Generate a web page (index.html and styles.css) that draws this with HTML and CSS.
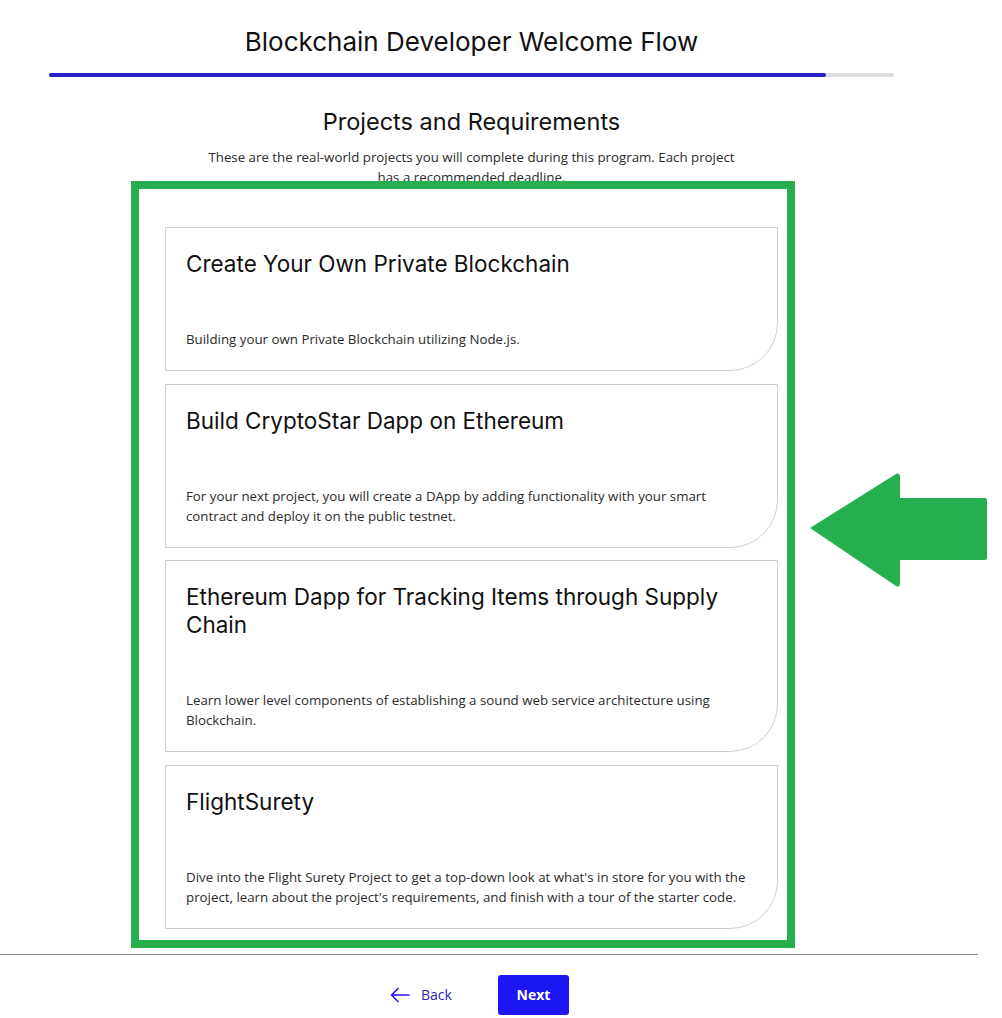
FILE: index.html
```html
<!DOCTYPE html>
<html lang="en">
<head>
    <meta charset="UTF-8">
    <meta name="viewport" content="width=device-width, initial-scale=1.0">
    <title>Blockchain Developer Welcome Flow</title>
    <link rel="stylesheet" href="styles.css">
</head>
<body>
    <div class="page">
        <header class="flow-header">
            <h1>Blockchain Developer Welcome Flow</h1>
            <div class="progress"><div class="progress-fill" style="width: 91.9%"></div></div>
        </header>

        <main class="step">
            <h2>Projects and Requirements</h2>
            <p class="intro">These are the real-world projects you will complete during this program. Each project has a recommended deadline.</p>

            <div class="projects">
                <div class="project-card">
                    <h3>Create Your Own Private Blockchain</h3>
                    <p>Building your own Private Blockchain utilizing Node.js.</p>
                </div>
                <div class="project-card">
                    <h3>Build CryptoStar Dapp on Ethereum</h3>
                    <p>For your next project, you will create a DApp by adding functionality with your smart contract and deploy it on the public testnet.</p>
                </div>
                <div class="project-card">
                    <h3>Ethereum Dapp for Tracking Items through Supply Chain</h3>
                    <p>Learn lower level components of establishing a sound web service architecture using Blockchain.</p>
                </div>
                <div class="project-card">
                    <h3>FlightSurety</h3>
                    <p>Dive into the Flight Surety Project to get a top-down look at what's in store for you with the project, learn about the project's requirements, and finish with a tour of the starter code.</p>
                </div>
                <div class="highlight-frame"></div>
            </div>
        </main>
    </div>

    <svg class="pointer-arrow" width="182" height="118" viewBox="0 0 182 118">
        <path d="M2 56 L88 2 Q92 0 92 5 L92 26 L177 26 Q179 26 179 28 L179 86 Q179 88 177 88 L92 88 L92 111 Q92 116 88 114 Z" fill="#27ae4f"/>
    </svg>

    <footer class="flow-footer">
        <button type="button" class="btn-back">
            <svg width="20" height="16" viewBox="0 0 20 16"><path d="M19 8 H2 M8 1.5 L1.5 8 L8 14.5" fill="none" stroke="#2015ff" stroke-width="1.6" stroke-linecap="round" stroke-linejoin="round"/></svg>
            Back
        </button>
        <button type="button" class="btn-next">Next</button>
    </footer>
</body>
</html>
```

FILE: styles.css
```css
body {
    margin: 0;
    font-family: "Open Sans", "Liberation Sans", sans-serif;
    color: #2b2b2b;
    background: #fff;
}
.page {
    width: 943px;
    padding: 0 49px;
    box-sizing: border-box;
}
.flow-header {
    padding-top: 26px;
}
.flow-header h1 {
    margin: 0;
    font-family: Inter, "Liberation Sans", sans-serif;
    font-weight: 400;
    font-size: 26px;
    line-height: 32px;
    text-align: center;
    color: #111;
}
.progress {
    margin-top: 15px;
    height: 4px;
    background: #dedede;
    border-radius: 2px;
}
.progress-fill {
    height: 4px;
    background: #2a1fc4;
    border-radius: 2px;
}
.step {
    padding-top: 30px;
}
.step h2 {
    margin: 0;
    font-family: Inter, "Liberation Sans", sans-serif;
    font-weight: 400;
    font-size: 23.5px;
    line-height: 30px;
    text-align: center;
    color: #111;
}
.intro {
    width: 540px;
    margin: 10px auto 0;
    font-size: 13.3px;
    line-height: 20px;
    text-align: center;
}
.projects {
    position: relative;
    width: 613px;
    margin: 40px auto 0;
    display: flex;
    flex-direction: column;
    gap: 12.5px;
}
.project-card {
    border: 1px solid #cfcfcf;
    border-bottom-right-radius: 48px;
    padding: 22px 20px 21px;
    background: #fff;
}
.project-card h3 {
    margin: 0 0 51px;
    font-family: Inter, "Liberation Sans", sans-serif;
    font-weight: 400;
    font-size: 22.5px;
    line-height: 28px;
    color: #111;
}
.project-card p {
    margin: 0;
    font-size: 13.3px;
    line-height: 20px;
}
.highlight-frame {
    position: absolute;
    left: -34px;
    top: -46px;
    right: -17px;
    bottom: -19px;
    border: 8px solid #27ae4f;
}
.pointer-arrow {
    position: absolute;
    left: 808px;
    top: 472px;
}
.flow-footer {
    width: 978px;
    margin-top: 25px;
    border-top: 1px solid #8a8a8a;
    display: flex;
    justify-content: center;
    align-items: center;
    gap: 46px;
    padding: 20px 19px 0 0;
    box-sizing: border-box;
}
.flow-footer button {
    font-family: "Open Sans", "Liberation Sans", sans-serif;
    font-size: 14px;
    cursor: pointer;
}
.btn-back {
    display: flex;
    align-items: center;
    gap: 11px;
    background: none;
    border: none;
    padding: 0;
    color: #2e26b8;
}
.btn-next {
    width: 71px;
    height: 40px;
    background: #1d16f4;
    color: #fff;
    font-weight: 700;
    border: none;
    border-radius: 3px;
}
```
